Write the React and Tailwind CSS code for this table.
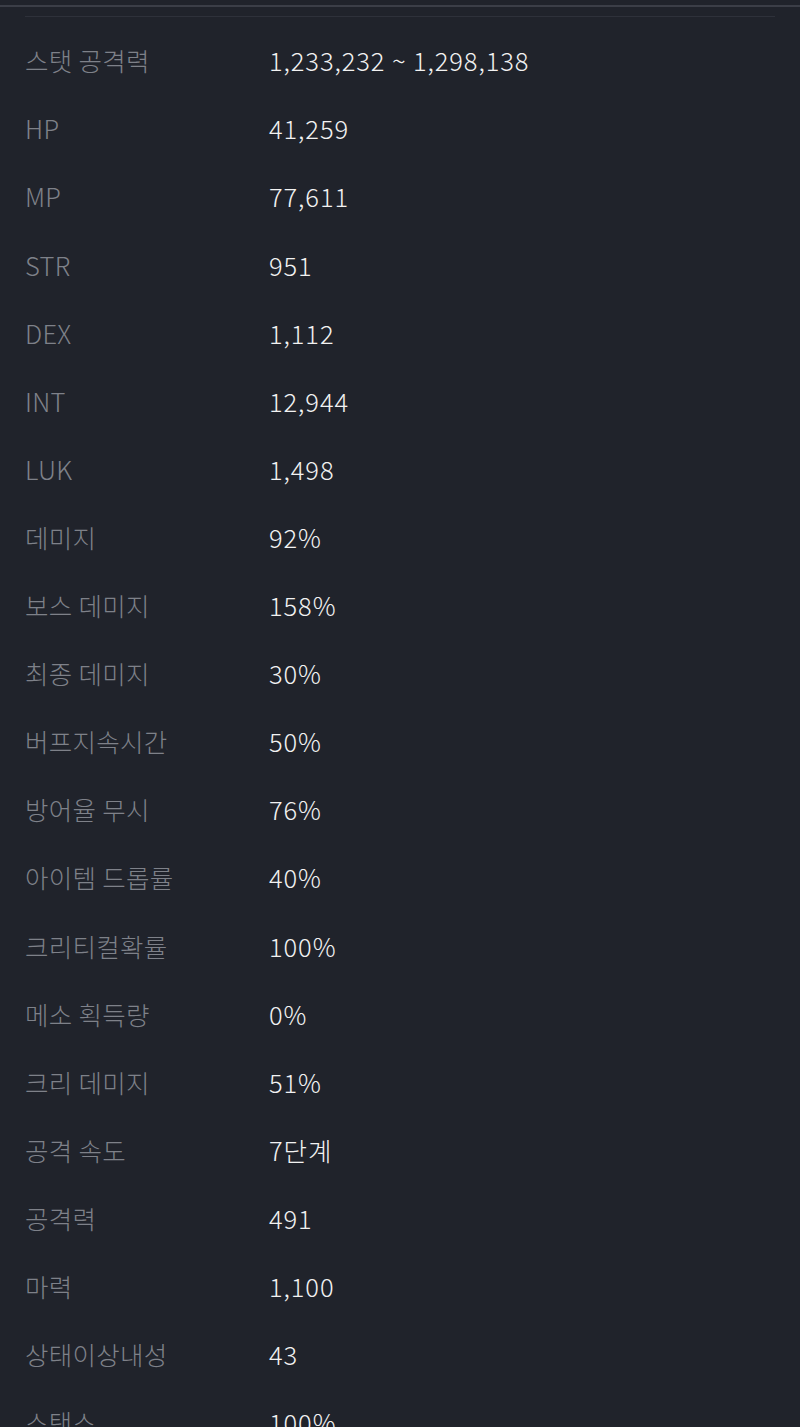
import React from 'react';

const stats = [
  ['스탯 공격력', '1,233,232 ~ 1,298,138'],
  ['HP', '41,259'],
  ['MP', '77,611'],
  ['STR', '951'],
  ['DEX', '1,112'],
  ['INT', '12,944'],
  ['LUK', '1,498'],
  ['데미지', '92%'],
  ['보스 데미지', '158%'],
  ['최종 데미지', '30%'],
  ['버프지속시간', '50%'],
  ['방어율 무시', '76%'],
  ['아이템 드롭률', '40%'],
  ['크리티컬확률', '100%'],
  ['메소 획득량', '0%'],
  ['크리 데미지', '51%'],
  ['공격 속도', '7단계'],
  ['공격력', '491'],
  ['마력', '1,100'],
  ['상태이상내성', '43'],
  ['스탠스', '100%'],
];

const App = () => {
  return (
    <div
      className="min-h-screen bg-[#20232b] overflow-hidden"
      style={{ fontFamily: '"Noto Sans CJK KR", "Noto Sans", sans-serif' }}
    >
      <div className="h-[5px]" />
      <div className="h-[2px] bg-[#3b3e47]" />
      <div className="mx-[25px] mt-[9px] border-t border-[#2e313a] pt-[9px]">
        {stats.map(([label, value]) => (
          <div key={label} className="flex items-center h-[68.1px] text-[25.5px] font-light leading-none">
            <div className="w-[244px] shrink-0 text-[#7e8189] tracking-[0.3px]">{label}</div>
            <div className="text-[#f2f2f2] tracking-[0.9px]">{value}</div>
          </div>
        ))}
      </div>
    </div>
  );
};

export default App;
